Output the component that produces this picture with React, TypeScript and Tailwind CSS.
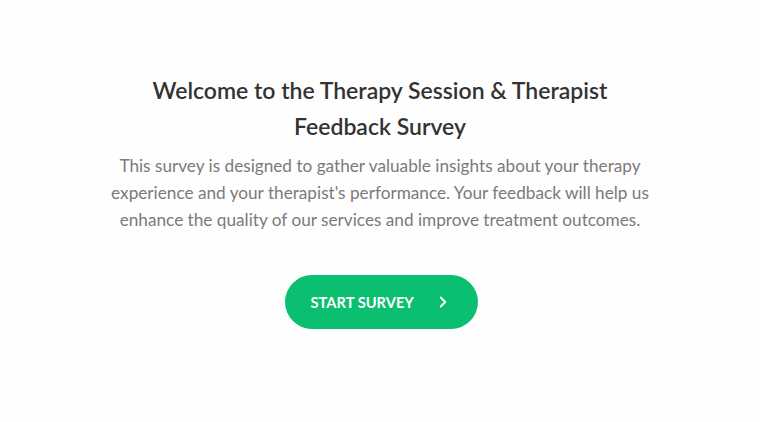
import { ChevronRight } from "lucide-react";

export default function App() {
  return (
    <div className="flex h-[422px] w-full flex-col items-center bg-[#fefefe] pt-[72px] font-['Lato',sans-serif]">
      <h1 className="w-[490px] text-center text-[23px] font-semibold leading-[36px] text-[#333333]">
        Welcome to the Therapy Session &amp; Therapist Feedback Survey
      </h1>
      <p className="mt-[8px] w-[580px] text-center text-[17.2px] leading-[27px] text-[#7a7a7a]">
        This survey is designed to gather valuable insights about your therapy
        experience and your therapist's performance. Your feedback will help us
        enhance the quality of our services and improve treatment outcomes.
      </p>
      <button className="ml-[2px] mt-[42px] flex h-[54px] w-[193px] items-center justify-between rounded-full bg-[#0abf6f] pl-[26px] pr-[26px] text-[14.7px] font-bold text-white">
        <span>START SURVEY</span>
        <ChevronRight className="h-[18px] w-[18px]" strokeWidth={2.5} />
      </button>
    </div>
  );
}
